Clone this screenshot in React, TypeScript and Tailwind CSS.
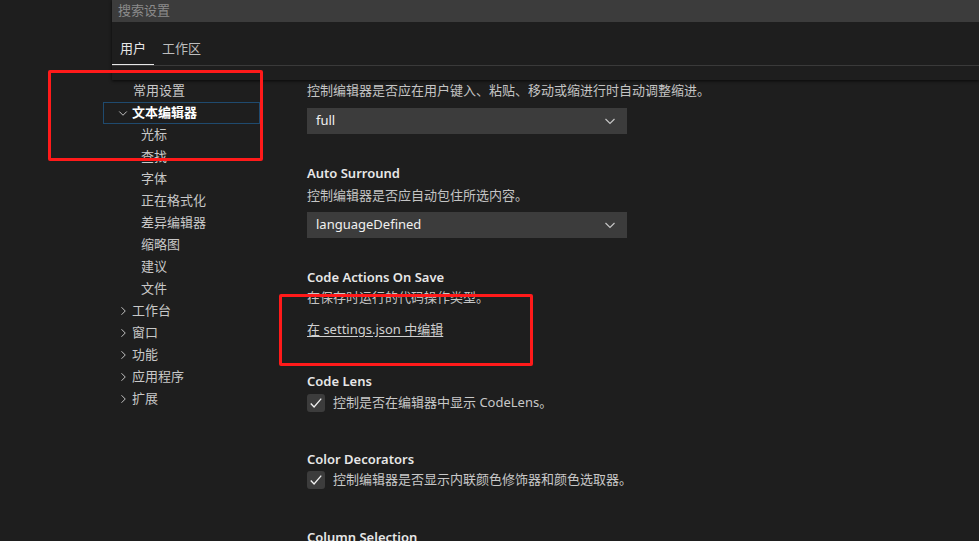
import React from "react"

const font = { fontFamily: '"Noto Sans", "Noto Sans CJK SC", sans-serif' }

const children = ["光标", "查找", "字体", "正在格式化", "差异编辑器", "缩略图", "建议", "文件"]
const collapsed = ["工作台", "窗口", "功能", "应用程序", "扩展"]

function ChevronDown() {
  return (
    <svg width="12" height="12" viewBox="0 0 16 16" className="shrink-0">
      <path d="M3 6l5 5 5-5" fill="none" stroke="#c5c5c5" strokeWidth="1.3" />
    </svg>
  )
}

function ChevronRight() {
  return (
    <svg width="12" height="12" viewBox="0 0 16 16" className="shrink-0">
      <path d="M6 3l5 5-5 5" fill="none" stroke="#c5c5c5" strokeWidth="1.3" />
    </svg>
  )
}

function Select({ value }: { value: string }) {
  return (
    <div className="flex h-[26px] w-[320px] items-center justify-between bg-[#3c3c3c] pl-[9px] pr-[9px] text-[13px] text-[#f0f0f0]">
      <span>{value}</span>
      <svg width="16" height="16" viewBox="0 0 16 16">
        <path d="M3.5 6l4.5 4.5L12.5 6" fill="none" stroke="#c5c5c5" strokeWidth="1.2" />
      </svg>
    </div>
  )
}

function Check({ label }: { label: string }) {
  return (
    <div className="flex h-[18px] items-center gap-[8px]">
      <div className="flex h-[18px] w-[18px] items-center justify-center rounded-[3px] bg-[#3c3c3c]">
        <svg width="14" height="14" viewBox="0 0 16 16">
          <path d="M2 8.5l3.8 4L14 3" fill="none" stroke="#f0f0f0" strokeWidth="1.5" />
        </svg>
      </div>
      <span className="text-[13px] text-[#c8c8c8]">{label}</span>
    </div>
  )
}

function Title({ children }: { children: React.ReactNode }) {
  return <div className="h-[20px] text-[13px] font-semibold leading-[20px] text-[#e7e7e7]">{children}</div>
}

function Desc({ children }: { children: React.ReactNode }) {
  return <div className="h-[20px] text-[13px] leading-[20px] text-[#c4c4c4]">{children}</div>
}

export default function App() {
  return (
    <div className="relative h-[541px] w-[979px] overflow-hidden bg-[#1e1e1e]" style={font}>
      {/* header */}
      <div className="relative z-10 ml-[112px] h-[80px] bg-[#1e1e1e] shadow-[0_1px_3px_rgba(0,0,0,0.75)]">
        <div className="flex h-[22px] items-center bg-[#3c3c3c] pl-[6px] text-[13px] text-[#8b8b8b]">搜索设置</div>
        <div className="flex h-[44px] items-end border-b border-[#3a3a3a]">
          <div className="flex h-[36px] w-[42px] items-center justify-center border-b border-[#e7e7e7] pt-[4px] text-[13px] text-[#e7e7e7]">
            用户
          </div>
          <div className="flex h-[36px] items-center pl-[8px] pt-[4px] text-[13px] text-[#bdbdbd]">工作区</div>
        </div>
      </div>

      <div className="flex">
        {/* toc */}
        <div className="ml-[103px] w-[157px] text-[13px] text-[#c8c8c8]">
          <div className="flex h-[22px] items-center pl-[30px]">常用设置</div>
          <div className="flex h-[22px] items-center gap-[3px] border border-[#1f4a6e] pl-[13px] font-bold text-white">
            <ChevronDown />
            <span>文本编辑器</span>
          </div>
          {children.map((c) => (
            <div key={c} className="flex h-[22px] items-center pl-[38px]">
              {c}
            </div>
          ))}
          {collapsed.map((c) => (
            <div key={c} className="flex h-[22px] items-center gap-[3px] pl-[14px]">
              <ChevronRight />
              <span>{c}</span>
            </div>
          ))}
        </div>

        {/* settings */}
        <div className="ml-[47px] flex flex-col">
          <Desc>控制编辑器是否应在用户键入、粘贴、移动或缩进行时自动调整缩进。</Desc>
          <div className="mt-[8px]">
            <Select value="full" />
          </div>

          <div className="mt-[29px]">
            <Title>Auto Surround</Title>
            <div className="mt-[2px]">
              <Desc>控制编辑器是否应自动包住所选内容。</Desc>
            </div>
            <div className="mt-[7px]">
              <Select value="languageDefined" />
            </div>
          </div>

          <div className="mt-[29px]">
            <Title>Code Actions On Save</Title>
            <Desc>在保存时运行的代码操作类型。</Desc>
            <div className="mt-[12px] h-[20px] text-[13px] leading-[20px] text-[#d0d0d0] underline underline-offset-2">
              在 settings.json 中编辑
            </div>
          </div>

          <div className="mt-[32px]">
            <Title>Code Lens</Title>
            <div className="mt-[3px]">
              <Check label="控制是否在编辑器中显示 CodeLens。" />
            </div>
          </div>

          <div className="mt-[37px]">
            <Title>Color Decorators</Title>
            <div className="mt-[2px]">
              <Check label="控制编辑器是否显示内联颜色修饰器和颜色选取器。" />
            </div>
          </div>

          <div className="mt-[38px]">
            <Title>Column Selection</Title>
          </div>
        </div>
      </div>

      {/* red annotation boxes */}
      <div className="absolute left-[48px] top-[70px] z-20 h-[91px] w-[215px] rounded-[2px] border-[3px] border-[#ff1a1a]" />
      <div className="absolute left-[279px] top-[294px] z-20 h-[72px] w-[254px] rounded-[2px] border-[3px] border-[#ff1a1a]" />
    </div>
  )
}
